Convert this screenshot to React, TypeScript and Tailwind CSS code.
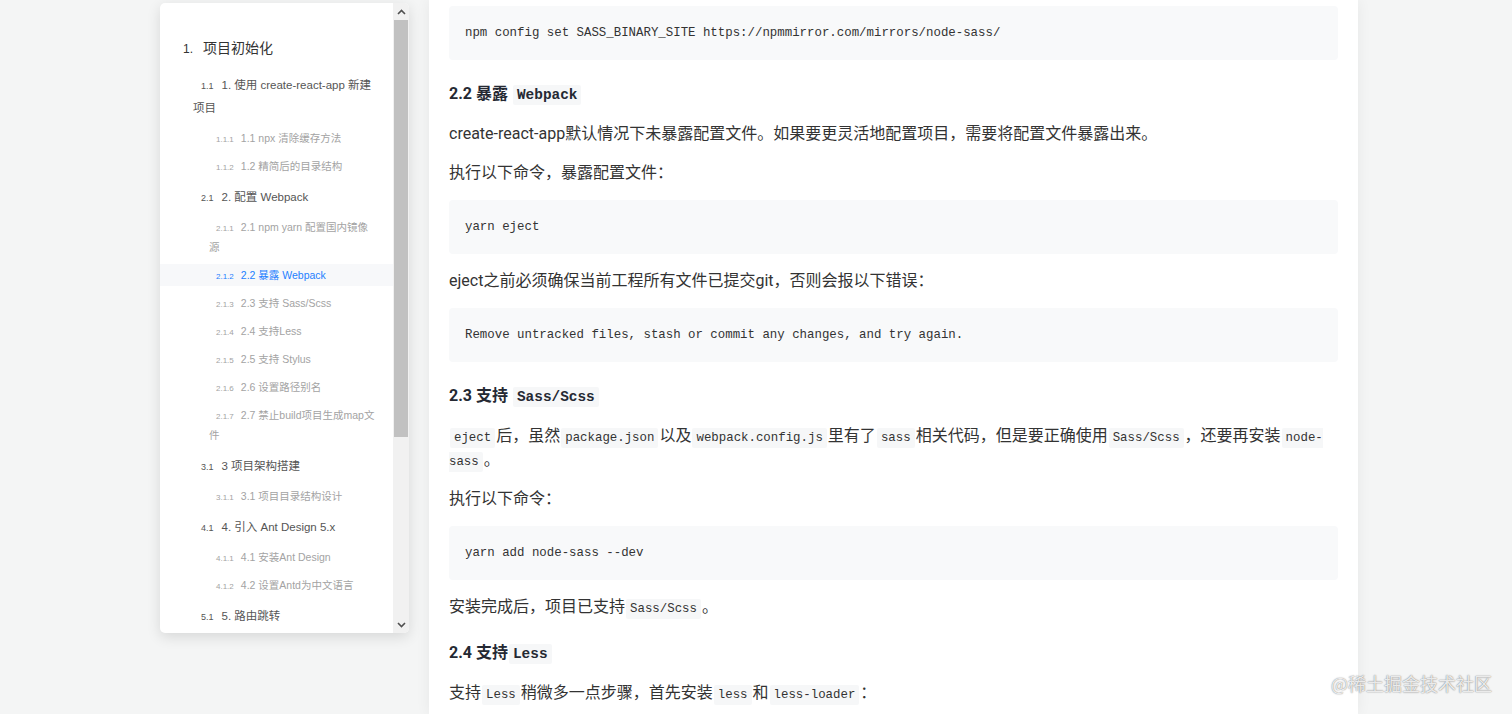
import React from 'react';

type TocItem = { lvl: 1 | 2 | 3; num: string; text: string; active?: boolean };

const toc: TocItem[] = [
  { lvl: 1, num: '1.', text: '项目初始化' },
  { lvl: 2, num: '1.1', text: '1. 使用 create-react-app 新建项目' },
  { lvl: 3, num: '1.1.1', text: '1.1 npx 清除缓存方法' },
  { lvl: 3, num: '1.1.2', text: '1.2 精简后的目录结构' },
  { lvl: 2, num: '2.1', text: '2. 配置 Webpack' },
  { lvl: 3, num: '2.1.1', text: '2.1 npm yarn 配置国内镜像源' },
  { lvl: 3, num: '2.1.2', text: '2.2 暴露 Webpack', active: true },
  { lvl: 3, num: '2.1.3', text: '2.3 支持 Sass/Scss' },
  { lvl: 3, num: '2.1.4', text: '2.4 支持Less' },
  { lvl: 3, num: '2.1.5', text: '2.5 支持 Stylus' },
  { lvl: 3, num: '2.1.6', text: '2.6 设置路径别名' },
  { lvl: 3, num: '2.1.7', text: '2.7 禁止build项目生成map文件' },
  { lvl: 2, num: '3.1', text: '3 项目架构搭建' },
  { lvl: 3, num: '3.1.1', text: '3.1 项目目录结构设计' },
  { lvl: 2, num: '4.1', text: '4. 引入 Ant Design 5.x' },
  { lvl: 3, num: '4.1.1', text: '4.1 安装Ant Design' },
  { lvl: 3, num: '4.1.2', text: '4.2 设置Antd为中文语言' },
  { lvl: 2, num: '5.1', text: '5. 路由跳转' },
];

function TocRow({ item }: { item: TocItem }) {
  if (item.lvl === 1) {
    return (
      <div className="pl-[23px] pr-[16px] pt-[33px] pb-[8px] text-[14px] leading-[24px] text-[#333]">
        <span className="text-[12px] leading-none mr-[10px]">{item.num}</span>
        {item.text}
      </div>
    );
  }
  if (item.lvl === 2) {
    return (
      <div className="mt-[5px] mb-[3px] py-[1px] pl-[33px] pr-[16px] indent-[8px] text-[11.5px] leading-[23px] text-[#555]">
        <span className="text-[9px] leading-none mr-[8px]">{item.num}</span>
        {item.text}
      </div>
    );
  }
  return (
    <div
      className={
        item.active
          ? 'my-[3px] py-[1px] pl-[49px] pr-[16px] indent-[7px] text-[10.5px] leading-[20px] text-[#1e80ff] bg-[#f7f8fa]'
          : 'my-[3px] py-[1px] pl-[49px] pr-[16px] indent-[7px] text-[10.5px] leading-[20px] text-[#a3a3a3]'
      }
    >
      <span className="text-[8px] leading-none mr-[7px]">{item.num}</span>
      {item.text}
    </div>
  );
}

function Chevron({ up }: { up?: boolean }) {
  return (
    <svg width="9" height="6" viewBox="0 0 9 6" aria-hidden="true">
      <polyline
        points={up ? '1,5 4.5,1.5 8,5' : '1,1 4.5,4.5 8,1'}
        fill="none"
        stroke="#505050"
        strokeWidth="1.6"
      />
    </svg>
  );
}

function Code({ children, head }: { children: React.ReactNode; head?: boolean }) {
  return (
    <code
      className={
        head
          ? 'font-["Liberation_Mono",monospace] text-[14.4px] leading-none font-bold bg-[#f6f7f8] rounded-[2px] px-[4px] py-[2px] mx-[1px]'
          : 'font-["Liberation_Mono",monospace] text-[12.4px] leading-none text-[#333] bg-[#f6f7f8] rounded-[2px] px-[4px] py-[3px] mx-[1px]'
      }
    >
      {children}
    </code>
  );
}

function Pre({ children }: { children: React.ReactNode }) {
  return (
    <pre className="my-[15px] first:mt-0 bg-[#f8f9fa] rounded-[4px] px-[16px] py-[16px] leading-[22px] font-['Liberation_Mono',monospace] text-[12.4px] text-[#333]">
      {children}
    </pre>
  );
}

function H({ children }: { children: React.ReactNode }) {
  return <h3 className="mt-[22px] mb-[16px] text-[16px] leading-[24px] font-bold text-[#252933]">{children}</h3>;
}

function P({ children }: { children: React.ReactNode }) {
  return <p className="my-[15px] text-[16px] leading-[24px] text-[#333]">{children}</p>;
}

export default function App() {
  return (
    <div className="relative h-[714px] overflow-hidden bg-[#f4f5f5]">
      <div className="flex items-start gap-[20px] pl-[160px]">
        {/* table of contents */}
        <aside className="mt-[3px] flex h-[630px] w-[249px] shrink-0 overflow-hidden rounded-[5px] bg-white shadow-[0_4px_14px_rgba(0,0,0,0.12)] font-['Liberation_Sans','Noto_Sans_CJK_SC',sans-serif]">
          <nav className="flex flex-1 flex-col">
            {toc.map((item) => (
              <TocRow key={item.num} item={item} />
            ))}
          </nav>
          <div className="flex w-[16px] flex-col bg-[#f1f1f1]">
            <div className="flex h-[17px] items-center justify-center">
              <Chevron up />
            </div>
            <div className="flex-1">
              <div className="mx-[1px] h-[417px] bg-[#c1c1c1]" />
            </div>
            <div className="flex h-[17px] items-center justify-center">
              <Chevron />
            </div>
          </div>
        </aside>

        {/* article */}
        <main className="h-[714px] w-[929px] shrink-0 overflow-hidden bg-white px-[20px] pt-[6px] shadow-[0_0_14px_rgba(0,0,0,0.06)] font-['Roboto','Noto_Sans_CJK_SC',sans-serif]">
          <Pre>npm config set SASS_BINARY_SITE https://npmmirror.com/mirrors/node-sass/</Pre>

          <H>
            2.2 暴露 <Code head>Webpack</Code>
          </H>
          <P>create-react-app默认情况下未暴露配置文件。如果要更灵活地配置项目，需要将配置文件暴露出来。</P>
          <P>执行以下命令，暴露配置文件：</P>
          <Pre>yarn eject</Pre>
          <P>eject之前必须确保当前工程所有文件已提交git，否则会报以下错误：</P>
          <Pre>Remove untracked files, stash or commit any changes, and try again.</Pre>

          <H>
            2.3 支持 <Code head>Sass/Scss</Code>
          </H>
          <P>
            <Code>eject</Code>后，虽然<Code>package.json</Code>以及<Code>webpack.config.js</Code>里有了<Code>sass</Code>
            相关代码，但是要正确使用<Code>Sass/Scss</Code>，还要再安装<Code>node-sass</Code>。
          </P>
          <P>执行以下命令：</P>
          <Pre>yarn add node-sass --dev</Pre>
          <P>
            安装完成后，项目已支持<Code>Sass/Scss</Code>。
          </P>

          <H>
            2.4 支持<Code head>Less</Code>
          </H>
          <P>
            支持<Code>Less</Code>稍微多一点步骤，首先安装<Code>less</Code>和<Code>less-loader</Code>：
          </P>
        </main>
      </div>

      {/* watermark */}
      <div className="absolute right-[20px] top-[671px] text-[18px] leading-[24px] text-[rgba(255,255,255,0.85)] [text-shadow:0_0_1px_rgba(0,0,0,0.45),0_0_2px_rgba(0,0,0,0.25)] font-['Noto_Sans_CJK_SC',sans-serif]">
        @稀土掘金技术社区
      </div>
    </div>
  );
}
